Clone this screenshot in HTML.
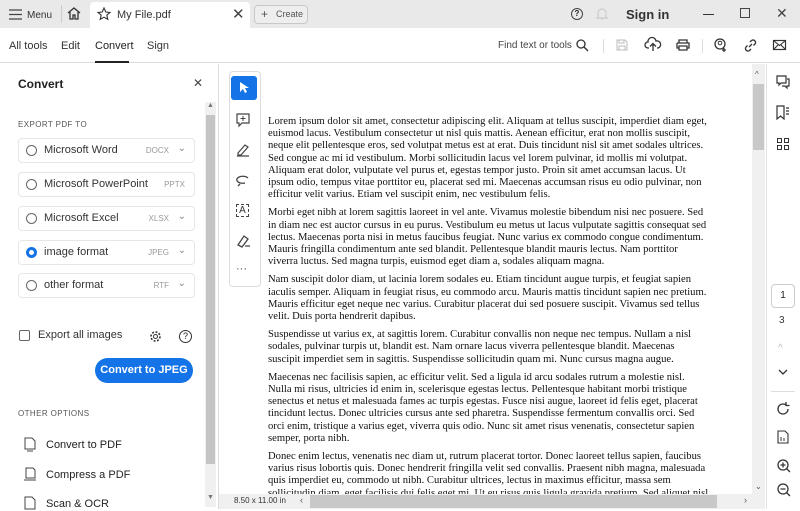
<!DOCTYPE html>
<html><head><meta charset="utf-8"><style>
*{margin:0;padding:0;box-sizing:border-box}
body{width:800px;height:509px;overflow:hidden;background:#fff;font-family:"Liberation Sans",sans-serif;position:relative;color:#222}
.a{position:absolute}
.top{left:0;top:0;width:800px;height:28px;background:#e9e9e9}
.tab{left:90px;top:2px;width:160px;height:26px;background:#fff;border-radius:4px 4px 0 0}
.nav{left:0;top:28px;width:800px;height:35px;border-bottom:1px solid #dcdcdc;background:#fff}
.t{font-size:11px;color:#333;white-space:nowrap}
.opt{left:18px;width:177px;height:25px;border:1px solid #e6e6e6;border-radius:4px;background:#fff}
.opt .r{position:absolute;left:7px;top:6px;width:11px;height:11px;border:1.3px solid #666;border-radius:50%}
.opt .l{position:absolute;left:25px;top:5px;font-size:11px;color:#333}
.opt .f{position:absolute;right:25px;top:7px;font-size:8px;color:#999}
.opt .c{position:absolute;right:8px;top:4px;font-size:10px;color:#888}
.doc{left:268px;top:116px;font-family:"Liberation Serif",serif;font-size:10.6px;line-height:12.2px;color:#111;white-space:nowrap}
.doc p{margin-bottom:6px}
svg{position:absolute;overflow:visible}
</style></head><body>
<div class="a top"></div>
<div class="a tab"></div>
<svg style="left:9px;top:9px" width="14" height="11"><path d="M0 1h13M0 5.5h13M0 10h13" stroke="#444" stroke-width="1.3"/></svg>
<div class="a t" style="left:27px;top:10px;font-size:10px">Menu</div>
<div class="a" style="left:61px;top:5px;width:1px;height:18px;background:#ccc"></div>
<svg style="left:67px;top:7px" width="14" height="13"><path d="M1 6L7 1l6 5M3 5v7h3V8h2v4h3V5" stroke="#333" stroke-width="1.3" fill="none"/></svg>
<svg style="left:97px;top:7px" width="14" height="14"><path d="M7 1l1.8 4 4.2.4-3.2 2.8 1 4.2L7 10.2 3.2 12.4l1-4.2L1 5.4l4.2-.4z" stroke="#333" stroke-width="1.1" fill="none"/></svg>
<div class="a t" style="left:117px;top:9px;font-size:11px">My File.pdf</div>
<div class="a t" style="left:232px;top:5px;font-size:15px;color:#444">✕</div>
<div class="a" style="left:254px;top:5px;width:54px;height:19px;border:1px solid #c8c8c8;border-radius:4px;background:#eee"></div>
<div class="a t" style="left:261px;top:7px;font-size:12px;color:#555">+</div>
<div class="a t" style="left:276px;top:9px;font-size:9px;color:#555">Create</div>
<div class="a" style="left:571px;top:8px;width:12px;height:12px;border:1.3px solid #444;border-radius:50%;font-size:8px;text-align:center;line-height:10px;font-weight:bold">?</div>
<svg style="left:596px;top:8px" width="12" height="13"><path d="M2 9V5a4 4 0 018 0v4l1 1H1zM5 11h2" stroke="#ccc" stroke-width="1.2" fill="none"/></svg>
<div class="a t" style="left:626px;top:7px;font-size:13px;font-weight:bold;color:#333">Sign in</div>
<div class="a" style="left:703px;top:14px;width:11px;height:1.3px;background:#333"></div>
<div class="a" style="left:740px;top:8px;width:10px;height:10px;border:1.2px solid #444"></div>
<div class="a t" style="left:776px;top:5px;font-size:14px;color:#444">✕</div>

<div class="a nav"></div>
<div class="a t" style="left:9px;top:40px">All tools</div>
<div class="a t" style="left:61px;top:40px">Edit</div>
<div class="a t" style="left:95px;top:40px;color:#222">Convert</div>
<div class="a" style="left:95px;top:61px;width:34px;height:2px;background:#222"></div>
<div class="a t" style="left:147px;top:40px">Sign</div>
<div class="a t" style="left:498px;top:40px;font-size:10px;color:#444">Find text or tools</div>
<svg style="left:576px;top:39px" width="13" height="13"><circle cx="5" cy="5" r="4" stroke="#333" stroke-width="1.3" fill="none"/><path d="M8 8l4 4" stroke="#333" stroke-width="1.4"/></svg>
<div class="a" style="left:603px;top:39px;width:1px;height:14px;background:#ddd"></div>
<svg style="left:616px;top:39px" width="12" height="12"><path d="M1 1h8l2 2v8H1zM3 1v3h5V1M3 11V7h6v4" stroke="#bbb" stroke-width="1" fill="none"/></svg>
<svg style="left:645px;top:38px" width="16" height="14"><path d="M4 10H3a3 3 0 010-6 4 4 0 018-1 3 3 0 012 7h-1M8 13V6M5 8.5L8 5.5l3 3" stroke="#333" stroke-width="1.3" fill="none"/></svg>
<svg style="left:676px;top:39px" width="14" height="12"><path d="M3 4V1h8v3M1 4h12v5h-2M3 9H1V4M3 7h8v4H3z" stroke="#333" stroke-width="1.3" fill="none"/></svg>
<div class="a" style="left:702px;top:39px;width:1px;height:14px;background:#ddd"></div>
<svg style="left:714px;top:38px" width="14" height="15"><circle cx="6" cy="6" r="5" stroke="#333" stroke-width="1.3" fill="none"/><circle cx="6" cy="5" r="1.8" stroke="#333" fill="none"/><path d="M10 10v4M8 12h4" stroke="#333" stroke-width="1.3"/></svg>
<svg style="left:744px;top:39px" width="13" height="13"><path d="M5 8l3-3M6 3l1.5-1.5a2.5 2.5 0 013.5 3.5L9.5 6.5M7 10l-1.5 1.5a2.5 2.5 0 01-3.5-3.5L3.5 6.5" stroke="#333" stroke-width="1.3" fill="none"/></svg>
<svg style="left:773px;top:40px" width="13" height="10"><rect x=".5" y=".5" width="12" height="9" stroke="#333" stroke-width="1.2" fill="none"/><path d="M.5 .5l6 5 6-5M.5 9.5l4.5-4.5M12.5 9.5L8 5" stroke="#333" stroke-width="1.1" fill="none"/></svg>

<!-- left panel -->
<div class="a" style="left:218px;top:64px;width:1px;height:445px;background:#ddd"></div>
<div class="a t" style="left:18px;top:77px;font-size:12px;font-weight:bold;color:#222">Convert</div>
<div class="a t" style="left:193px;top:76px;font-size:12px;color:#444">✕</div>
<div class="a" style="left:205px;top:102px;width:11px;height:405px;background:#f0f0f0"></div>
<div class="a" style="left:206px;top:115px;width:9px;height:349px;background:#c4c4c4"></div>
<div class="a t" style="left:207px;top:102px;font-size:7px;color:#777">▲</div>
<div class="a t" style="left:207px;top:494px;font-size:7px;color:#777">▼</div>
<div class="a t" style="left:18px;top:120px;font-size:8px;color:#555;letter-spacing:.4px">EXPORT PDF TO</div>
<div class="a opt" style="top:138px"><div class="r"></div><div class="l">Microsoft Word</div><div class="f">DOCX</div><div class="c">⌄</div></div>
<div class="a opt" style="top:172px"><div class="r"></div><div class="l">Microsoft PowerPoint</div><div class="f" style="right:9px">PPTX</div></div>
<div class="a opt" style="top:206px"><div class="r"></div><div class="l">Microsoft Excel</div><div class="f">XLSX</div><div class="c">⌄</div></div>
<div class="a opt" style="top:240px"><div class="r" style="border:3px solid #1473e6"></div><div class="l">image format</div><div class="f">JPEG</div><div class="c">⌄</div></div>
<div class="a opt" style="top:273px"><div class="r"></div><div class="l">other format</div><div class="f">RTF</div><div class="c">⌄</div></div>
<div class="a" style="left:19px;top:330px;width:11px;height:11px;border:1.3px solid #666;border-radius:2px"></div>
<div class="a t" style="left:38px;top:329px">Export all images</div>
<svg style="left:149px;top:330px" width="13" height="13"><circle cx="6.5" cy="6.5" r="2" stroke="#333" fill="none"/><circle cx="6.5" cy="6.5" r="4.5" stroke="#333" stroke-width="1.6" stroke-dasharray="2 1.5" fill="none"/></svg>
<div class="a" style="left:179px;top:330px;width:13px;height:13px;border:1.2px solid #333;border-radius:50%;font-size:9px;text-align:center;line-height:11px">?</div>
<div class="a" style="left:95px;top:358px;width:98px;height:25px;border-radius:13px;background:#1473e6;color:#fff;font-size:11px;font-weight:bold;text-align:center;line-height:25px">Convert to JPEG</div>
<div class="a t" style="left:18px;top:409px;font-size:8px;color:#555;letter-spacing:.4px">OTHER OPTIONS</div>
<svg style="left:24px;top:437px" width="12" height="15"><path d="M1 1h7l3 3v8H1zM3 14h6" stroke="#444" stroke-width="1" fill="none"/></svg>
<div class="a t" style="left:46px;top:439px;color:#222">Convert to PDF</div>
<svg style="left:24px;top:467px" width="12" height="15"><path d="M2 1h7l2 2v8H2zM0 13h12" stroke="#444" stroke-width="1" fill="none"/></svg>
<div class="a t" style="left:46px;top:469px;color:#222">Compress a PDF</div>
<svg style="left:24px;top:496px" width="12" height="15"><path d="M1 1h7l3 3v9H1z" stroke="#444" stroke-width="1" fill="none"/></svg>
<div class="a t" style="left:46px;top:498px;color:#222">Scan &amp; OCR</div>

<!-- floating toolbar -->
<div class="a" style="left:229px;top:71px;width:32px;height:216px;border:1px solid #ddd;border-radius:4px;background:#fff"></div>
<div class="a" style="left:231px;top:76px;width:26px;height:24px;background:#1473e6;border-radius:3px"></div>
<svg style="left:239px;top:81px" width="12" height="14"><path d="M1 1v10l3-3 2 4 2-1-2-4h4z" fill="#fff"/></svg>
<svg style="left:236px;top:113px" width="16" height="16"><path d="M1 1h12v9H6l-3 3v-3H1z" stroke="#444" stroke-width="1.2" fill="none"/><path d="M7 3v5M4.5 5.5h5" stroke="#444"/></svg>
<svg style="left:236px;top:142px" width="16" height="16"><path d="M2 11l7-8 3 2-7 8H2zM1 14h12" stroke="#444" stroke-width="1.2" fill="none"/></svg>
<svg style="left:236px;top:174px" width="16" height="14"><path d="M12 4a6 3.5 0 10-3 5M4 10l-2 2" stroke="#444" stroke-width="1.3" fill="none"/></svg>
<div class="a" style="left:236px;top:204px;width:13px;height:13px;border:1px dashed #444;font-size:10px;text-align:center;line-height:12px;color:#333">A</div>
<svg style="left:236px;top:233px" width="16" height="16"><path d="M2 12l6-9 4 3-6 8zM9 13h5" stroke="#444" stroke-width="1.3" fill="none"/></svg>
<div class="a t" style="left:236px;top:263px;font-size:11px;color:#444">···</div>

<!-- document -->
<div class="a doc">
<p>Lorem ipsum dolor sit amet, consectetur adipiscing elit. Aliquam at tellus suscipit, imperdiet diam eget,<br>euismod lacus. Vestibulum consectetur ut nisl quis mattis. Aenean efficitur, erat non mollis suscipit,<br>neque elit pellentesque eros, sed volutpat metus est at erat. Duis tincidunt nisl sit amet sodales ultrices.<br>Sed congue ac mi id vestibulum. Morbi sollicitudin lacus vel lorem pulvinar, id mollis mi volutpat.<br>Aliquam erat dolor, vulputate vel purus et, egestas tempor justo. Proin sit amet accumsan lacus. Ut<br>ipsum odio, tempus vitae porttitor eu, placerat sed mi. Maecenas accumsan risus eu odio pulvinar, non<br>efficitur velit varius. Etiam vel suscipit enim, nec vestibulum felis.</p>
<p>Morbi eget nibh at lorem sagittis laoreet in vel ante. Vivamus molestie bibendum nisi nec posuere. Sed<br>in diam nec est auctor cursus in eu purus. Vestibulum eu metus ut lacus vulputate sagittis consequat sed<br>lectus. Maecenas porta nisi in metus faucibus feugiat. Nunc varius ex commodo congue condimentum.<br>Mauris fringilla condimentum ante sed blandit. Pellentesque blandit mauris lectus. Nam porttitor<br>viverra luctus. Sed magna turpis, euismod eget diam a, sodales aliquam magna.</p>
<p>Nam suscipit dolor diam, ut lacinia lorem sodales eu. Etiam tincidunt augue turpis, et feugiat sapien<br>iaculis semper. Aliquam in feugiat risus, eu commodo arcu. Mauris mattis tincidunt sapien nec pretium.<br>Mauris efficitur eget neque nec varius. Curabitur placerat dui sed posuere suscipit. Vivamus sed tellus<br>velit. Duis porta hendrerit dapibus.</p>
<p>Suspendisse ut varius ex, at sagittis lorem. Curabitur convallis non neque nec tempus. Nullam a nisl<br>sodales, pulvinar turpis ut, blandit est. Nam ornare lacus viverra pellentesque blandit. Maecenas<br>suscipit imperdiet sem in sagittis. Suspendisse sollicitudin quam mi. Nunc cursus magna augue.</p>
<p>Maecenas nec facilisis sapien, ac efficitur velit. Sed a ligula id arcu sodales rutrum a molestie nisl.<br>Nulla mi risus, ultricies id enim in, scelerisque egestas lectus. Pellentesque habitant morbi tristique<br>senectus et netus et malesuada fames ac turpis egestas. Fusce nisi augue, laoreet id felis eget, placerat<br>tincidunt lectus. Donec ultricies cursus ante sed pharetra. Suspendisse fermentum convallis orci. Sed<br>orci enim, tristique a varius eget, viverra quis odio. Nunc sit amet risus venenatis, consectetur sapien<br>semper, porta nibh.</p>
<p>Donec enim lectus, venenatis nec diam ut, rutrum placerat tortor. Donec laoreet tellus sapien, faucibus<br>varius risus lobortis quis. Donec hendrerit fringilla velit sed convallis. Praesent nibh magna, malesuada<br>quis imperdiet eu, commodo ut nibh. Curabitur ultrices, lectus in maximus efficitur, massa sem<br>sollicitudin diam, eget facilisis dui felis eget mi. Ut eu risus quis ligula gravida pretium. Sed aliquet nisl</p>
</div>

<!-- doc scrollbars -->
<div class="a" style="left:752px;top:64px;width:13px;height:430px;background:#f0f0f0"></div>
<div class="a" style="left:753px;top:84px;width:11px;height:66px;background:#c8c8c8"></div>
<div class="a t" style="left:755px;top:70px;font-size:8px;color:#555">^</div>
<div class="a t" style="left:755px;top:482px;font-size:8px;color:#555">⌄</div>
<div class="a" style="left:219px;top:494px;width:546px;height:15px;background:#f0f0f0"></div>
<div class="a" style="left:310px;top:495px;width:407px;height:13px;background:#c8c8c8"></div>
<div class="a t" style="left:234px;top:496px;font-size:8px;color:#333">8.50 x 11.00 in</div>
<div class="a t" style="left:300px;top:495px;font-size:9px;color:#555">‹</div>
<div class="a t" style="left:744px;top:495px;font-size:9px;color:#555">›</div>

<!-- right rail -->
<div class="a" style="left:766px;top:64px;width:1px;height:445px;background:#e2e2e2"></div>
<svg style="left:776px;top:75px" width="14" height="14"><path d="M1 1h9v7H5l-2 2V8H1zM11 4h2v7h-2v2l-2-2H6" stroke="#333" stroke-width="1.2" fill="none"/></svg>
<svg style="left:776px;top:105px" width="14" height="15"><path d="M1 1h7v13l-3.5-3L1 14zM10 3h3M10 6h3M10 9h3" stroke="#333" stroke-width="1.2" fill="none"/></svg>
<svg style="left:777px;top:138px" width="12" height="12"><path d="M.5.5h4v4h-4zM7.5.5h4v4h-4zM.5 7.5h4v4h-4zM7.5 7.5h4v4h-4z" stroke="#333" fill="none"/></svg>
<div class="a" style="left:771px;top:284px;width:24px;height:24px;border:1px solid #ccc;border-radius:4px;font-size:10px;text-align:center;line-height:22px">1</div>
<div class="a t" style="left:779px;top:315px;font-size:10px">3</div>
<div class="a t" style="left:778px;top:343px;font-size:10px;color:#bbb">^</div>
<svg style="left:778px;top:369px" width="10" height="7"><path d="M1 1l4 4 4-4" stroke="#333" stroke-width="1.3" fill="none"/></svg>
<div class="a" style="left:771px;top:391px;width:24px;height:1px;background:#ddd"></div>
<svg style="left:776px;top:402px" width="14" height="14"><path d="M12 7a5 5 0 11-2-4M10 0v3.5h3.5" stroke="#333" stroke-width="1.3" fill="none"/></svg>
<svg style="left:777px;top:430px" width="13" height="15"><path d="M1 1h7l3 3v9H1z" stroke="#333" stroke-width="1.1" fill="none"/><path d="M4 7v4M7 8v3" stroke="#333"/></svg>
<svg style="left:777px;top:459px" width="14" height="14"><circle cx="6" cy="6" r="5" stroke="#333" stroke-width="1.3" fill="none"/><path d="M9.5 9.5l3.5 3.5M6 3.5v5M3.5 6h5" stroke="#333" stroke-width="1.3"/></svg>
<svg style="left:777px;top:483px" width="14" height="14"><circle cx="6" cy="6" r="5" stroke="#333" stroke-width="1.3" fill="none"/><path d="M9.5 9.5l3.5 3.5M3.5 6h5" stroke="#333" stroke-width="1.3"/></svg>
</body></html>
